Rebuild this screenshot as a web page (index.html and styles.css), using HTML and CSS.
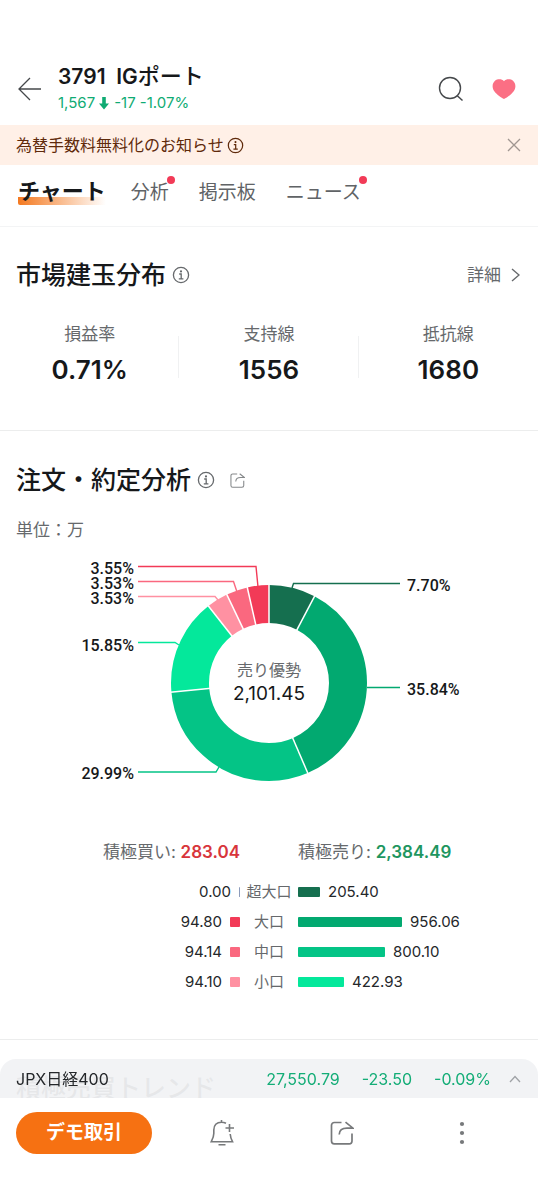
FILE: index.html
```html
<!DOCTYPE html>
<html lang="ja">
<head>
<meta charset="utf-8">
<meta name="viewport" content="width=device-width, initial-scale=1">
<title>3791 IGポート</title>
<link rel="stylesheet" href="styles.css">
</head>
<body>
<svg class="sprite" aria-hidden="true">
  <symbol id="info" viewBox="0 0 18 18"><g fill="none" stroke="currentColor" stroke-width="1.3"><circle cx="9" cy="9" r="7.6"/><path d="M7.2 8h2v4.6M6.8 12.8h4.6"/></g><circle cx="9" cy="5.4" r="1.1" fill="currentColor"/></symbol>
  <symbol id="share" viewBox="0 0 24 24"><path d="M11.5 1.500H4.300A2.800 2.800 0 0 0 1.500 4.300V20A2.800 2.800 0 0 0 4.300 22.800H19.200A2.800 2.800 0 0 0 22 20V12.500M15.500 1.200L23 7.200H17Q9.500 7.200 9.200 13.500" fill="none" stroke="currentColor" stroke-width="1.700"/></symbol>
</svg>
<header class="header">
  <button class="icon-btn" aria-label="戻る"><svg width="24" height="24" viewBox="0 0 24 24"><path d="M13 1L2 12l11 11M2 12h22" fill="none" stroke="currentColor" stroke-width="1.3"/></svg></button>
  <div class="title">
    <h1><span class="code">3791&nbsp; IG</span>ポート</h1>
    <p class="quote"><span>1,567</span><svg width="10" height="13" viewBox="0 0 10 13"><path d="M3.200 0h3.600v6.500H10L5 12.500 0 6.500h3.200z" fill="currentColor"/></svg><span class="change">-17 -1.07%</span></p>
  </div>
  <button class="icon-btn" aria-label="検索"><svg width="26" height="26" viewBox="0 0 26 26"><path d="M19 19.500l5.500 5" stroke="currentColor" stroke-width="1.500"/><circle cx="12" cy="12" r="10.500" fill="none" stroke="currentColor" stroke-width="1.400"/></svg></button>
  <button class="icon-btn heart" aria-label="お気に入り"><svg width="24" height="20" viewBox="0 0 24 20"><path d="M12 2.300C14-.2 18.500-.3 21 1.800c3 2.600 3.200 7.200.5 10.700C19.200 15.500 14.500 19 12 20 9.500 19 4.800 15.500 2.500 12.500-.2 9 0 4.400 3 1.800 5.500-.3 10-.2 12 2.300z" fill="currentColor"/></svg></button>
</header>
<aside class="notice">
  <a href="#notice">為替手数料無料化のお知らせ</a>
  <svg class="info" width="17" height="17"><use href="#info"/></svg>
  <button class="icon-btn close" aria-label="閉じる"><svg width="14" height="14" viewBox="0 0 14 14"><path d="M1 1l12 12M13 1L1 13" stroke="currentColor" stroke-width="1.300"/></svg></button>
</aside>
<nav class="tabs">
  <a class="active" href="#chart">チャート</a>
  <a class="dot" href="#analysis">分析</a>
  <a href="#board">掲示板</a>
  <a class="dot" href="#news">ニュース</a>
</nav>
<main>
  <section class="positions">
    <div class="head">
      <h2>市場建玉分布</h2>
      <svg class="info" width="18" height="18"><use href="#info"/></svg>
      <a class="more" href="#detail">詳細<svg width="9" height="14" viewBox="0 0 9 14"><path d="M1 1l7 6-7 6" fill="none" stroke="currentColor" stroke-width="1.400"/></svg></a>
    </div>
    <dl class="stats">
      <div><dt>損益率</dt><dd>0.71%</dd></div>
      <div><dt>支持線</dt><dd>1556</dd></div>
      <div><dt>抵抗線</dt><dd>1680</dd></div>
    </dl>
  </section>
  <section class="orders">
    <div class="head">
      <h2>注文・約定分析</h2>
      <svg class="info" width="18" height="18"><use href="#info"/></svg>
      <button class="icon-btn share" aria-label="共有"><svg width="15" height="15"><use href="#share"/></svg></button>
    </div>
    <p class="unit">単位：万</p>
    <svg class="donut" viewBox="0 0 400 240" role="img" aria-label="注文・約定分析">
      <g class="ring" fill="none" stroke-width="38" transform="rotate(-90 200 128)">
        <circle class="s1" cx="200" cy="128" r="79" pathLength="100" stroke-dasharray="7.700 92.300"/>
        <circle class="s2" cx="200" cy="128" r="79" pathLength="100" stroke-dasharray="35.840 64.160" stroke-dashoffset="-7.700"/>
        <circle class="s3" cx="200" cy="128" r="79" pathLength="100" stroke-dasharray="29.990 70.010" stroke-dashoffset="-43.540"/>
        <circle class="s4" cx="200" cy="128" r="79" pathLength="100" stroke-dasharray="15.850 84.150" stroke-dashoffset="-73.530"/>
        <circle class="s5" cx="200" cy="128" r="79" pathLength="100" stroke-dasharray="3.530 96.470" stroke-dashoffset="-89.380"/>
        <circle class="s6" cx="200" cy="128" r="79" pathLength="100" stroke-dasharray="3.530 96.470" stroke-dashoffset="-92.910"/>
        <circle class="s7" cx="200" cy="128" r="79" pathLength="100" stroke-dasharray="3.560 96.440" stroke-dashoffset="-96.440"/>
      </g>
      <g stroke="#fff" stroke-width="1.500">
        <path d="M200 29v41"/>
        <path d="M200 29v41" transform="rotate(27.700 200 128)"/>
        <path d="M200 29v41" transform="rotate(156.700 200 128)"/>
        <path d="M200 29v41" transform="rotate(264.700 200 128)"/>
        <path d="M200 29v41" transform="rotate(321.800 200 128)"/>
        <path d="M200 29v41" transform="rotate(334.500 200 128)"/>
        <path d="M200 29v41" transform="rotate(347.200 200 128)"/>
      </g>
      <g fill="none" stroke-width="1.400">
        <path class="s1" d="M331 28.500H224.500L223 33"/>
        <path class="s2" d="M331 132.500H298"/>
        <path class="s3" d="M69 217H147L150 212"/>
        <path class="s4" d="M69 87.500H106L110 90"/>
        <path class="s5" d="M69 41.500H146L149 45"/>
        <path class="s6" d="M69 26.500H164.500L168 37"/>
        <path class="s7" d="M69 11.500H187L189 32"/>
      </g>
      <g class="pct">
        <text x="338" y="36">7.70%</text>
        <text x="338" y="140">35.84%</text>
      </g>
      <g class="pct" text-anchor="end">
        <text x="65" y="19">3.55%</text>
        <text x="65" y="34">3.53%</text>
        <text x="65" y="49">3.53%</text>
        <text x="65" y="96">15.85%</text>
        <text x="65" y="224">29.99%</text>
      </g>
      <g text-anchor="middle">
        <text class="ring-label" x="200" y="121">売り優勢</text>
        <text class="ring-value" x="200" y="145">2,101.45</text>
      </g>
    </svg>
    <div class="totals">
      <p>積極買い: <strong class="buy">283.04</strong></p>
      <p>積極売り: <strong class="sell">2,384.49</strong></p>
    </div>
    <ul class="bars">
      <li><span class="left">0.00<i class="bar none"></i></span><span>超大口</span><span class="right"><i class="bar b1" style="width:22px"></i>205.40</span></li>
      <li><span class="left">94.80<i class="bar b7" style="width:10px"></i></span><span>大口</span><span class="right"><i class="bar b2" style="width:104px"></i>956.06</span></li>
      <li><span class="left">94.14<i class="bar b6" style="width:10px"></i></span><span>中口</span><span class="right"><i class="bar b3" style="width:87px"></i>800.10</span></li>
      <li><span class="left">94.10<i class="bar b5" style="width:10px"></i></span><span>小口</span><span class="right"><i class="bar b4" style="width:46px"></i>422.93</span></li>
    </ul>
  </section>
  <section class="trend">
    <h2>積極売買トレンド</h2>
  </section>
</main>
<footer class="dock">
  <div class="ticker">
    <span class="index">JPX日経400</span>
    <span>27,550.79</span>
    <span>-23.50</span>
    <span>-0.09%</span>
    <button class="icon-btn expand" aria-label="開く"><svg width="12" height="8" viewBox="0 0 12 8"><path d="M1 7l5-5.500L11 7" fill="none" stroke="currentColor" stroke-width="1.300"/></svg></button>
  </div>
  <div class="actions">
    <button class="demo">デモ取引</button>
    <button class="icon-btn" aria-label="アラート"><svg width="26" height="26" viewBox="0 0 26 26"><path d="M17 3.200Q15 2.200 12.500 2.200C7.500 2.200 4.800 5.500 4.800 10v3.500Q4.800 17 2.300 21.700H23.500Q21.500 18 21.200 14M12.500 0v2.200M9.500 24.800h7M20.500 4v8M16.500 8h8.500" fill="none" stroke="currentColor" stroke-width="1.600"/></svg></button>
    <button class="icon-btn" aria-label="共有"><svg width="24" height="24"><use href="#share"/></svg></button>
    <button class="icon-btn" aria-label="メニュー"><svg width="24" height="24" viewBox="0 0 24 24" fill="currentColor"><circle cx="12" cy="3" r="2.100"/><circle cx="12" cy="12" r="2.100"/><circle cx="12" cy="21" r="2.100"/></svg></button>
  </div>
</footer>
</body>
</html>
```
FILE: styles.css
```css
* { box-sizing: border-box; }
body {
  margin: 0;
  background: #fff;
  color: #16181a;
  font: 16px/24px Inter, "Noto Sans CJK JP", sans-serif;
}
h1, h2, p, dl, dd, ul { margin: 0; padding: 0; }
a { color: inherit; text-decoration: none; }
svg { display: block; flex: none; }
.sprite { position: absolute; width: 0; height: 0; }
.icon-btn { display: flex; padding: 0; border: 0; background: none; color: inherit; }
button { font: inherit; cursor: pointer; }

.header {
  display: flex;
  align-items: center;
  height: 125px;
  padding: 52px 22px 0 17px;
  color: #45484b;
}
.title { flex: 1; padding-left: 17px; }
h1 { font-size: 22px; line-height: 28px; font-weight: 500; color: #16181a; }
.code { font-size: 21px; font-weight: 600; }
.quote { display: flex; align-items: center; font-size: 15px; line-height: 24px; color: #0fab73; }
.quote svg { margin: 0 5px 0 4px; }
.heart { margin-left: 28px; color: #fb6f84; }

.notice {
  display: flex;
  align-items: center;
  height: 40px;
  padding: 0 17px 0 16px;
  background: #fff0e7;
  color: #5f2a0b;
}
.notice .info { margin-left: 3px; }
.close { margin-left: auto; color: #a09691; }

.tabs {
  display: flex;
  gap: 30px;
  height: 62px;
  padding: 12px 18px 0;
  border-bottom: 1px solid #f3f4f5;
  font-size: 19px;
  line-height: 32px;
  color: #606366;
}
.tabs a { position: relative; }
.tabs .active {
  align-self: flex-start;
  margin-right: -5px;
  color: #16181a;
  font-size: 22px;
  font-weight: 700;
  line-height: 28px;
  background: linear-gradient(90deg, #f47920, #fff) bottom / 100% 8px no-repeat;
  border-bottom-left-radius: 2px;
}
.dot::after {
  content: "";
  position: absolute;
  top: -1px;
  right: -6px;
  width: 8px;
  height: 8px;
  border-radius: 50%;
  background: #f23a57;
}

.positions { height: 204px; padding: 30px 16px 0; border-bottom: 1px solid #eceded; }
.head { display: flex; align-items: center; color: #66696c; }
h2 { font-size: 25px; line-height: 36px; font-weight: 500; color: #16181a; }
.head .info { margin-left: 6px; }
.more { display: flex; align-items: center; gap: 10px; margin-left: auto; margin-right: 2px; font-size: 17px; }
.stats { display: grid; grid-template-columns: repeat(3, 1fr); margin: 28px -16px 0; text-align: center; }
.stats div { background: linear-gradient(#f0f1f2, #f0f1f2) right 15px / 1px 42px no-repeat; }
.stats div:last-child { background: none; }
.stats dt { font-size: 17px; line-height: 26px; color: #66696c; }
.stats dd { margin-top: 6px; font-size: 26px; line-height: 34px; font-weight: 600; }

.orders { padding: 31px 0 42px; border-bottom: 1px solid #eceded; }
.orders .head, .unit { padding: 0 16px; }
.share { margin-left: 15px; color: #85888a; }
.unit { margin-top: 19px; font-size: 17px; line-height: 26px; color: #66696c; }
.donut { width: 400px; max-width: 100%; margin: 12px auto 0; }
.pct { font: 500 16px Roboto, sans-serif; fill: #16181a; }
.ring-label { font-size: 16px; fill: #66696c; }
.ring-value { font-size: 19px; fill: #16181a; }
.s1 { stroke: #156f4f; }
.s2 { stroke: #02a970; }
.s3 { stroke: #04c486; }
.s4 { stroke: #04e89b; }
.s5 { stroke: #ff91a2; }
.s6 { stroke: #fa687f; }
.s7 { stroke: #f23a57; }
.totals { display: grid; grid-template-columns: 1fr 1fr; gap: 58px; margin-top: 44px; font-size: 17px; line-height: 26px; color: #66696c; }
.totals p:first-child { text-align: right; }
.totals strong { font-weight: 600; font-size: 17px; }
.buy { color: #d8353b; }
.sell { color: #1e965f; }
.bars { margin-top: 12px; list-style: none; color: #66696c; }
.bars li { display: grid; grid-template-columns: 1fr 58px 1fr; align-items: center; height: 30px; text-align: center; font-size: 15px; }
.left, .right { display: flex; align-items: center; gap: 8px; color: #24272a; }
.left { justify-content: flex-end; }
.bar { height: 10px; border-radius: 1px; }
.none { width: 1px; background: #8c9bbb; }
.b1 { background: #156f4f; }
.b2 { background: #02a970; }
.b3 { background: #04c486; }
.b4 { background: #04e89b; }
.b5 { background: #ff91a2; }
.b6 { background: #fa687f; }
.b7 { background: #f23a57; }
.trend { padding: 30px 16px 94px; }

.dock { position: fixed; inset: auto 0 0; }
.ticker {
  display: flex;
  align-items: center;
  gap: 22px;
  height: 39px;
  padding: 0 17px 0 16px;
  border-radius: 16px 16px 0 0;
  background: rgba(241, 242, 244, 0.95);
  color: #14ad77;
}
.index { margin-right: auto; color: #24272a; }
.expand { margin-left: -4px; color: #a0a3a6; }
.actions {
  display: grid;
  grid-template-columns: 146px 1fr 1fr 1fr;
  justify-items: center;
  align-items: center;
  height: 102px;
  padding: 0 16px 32px;
  background: #fff;
  color: #77797b;
}
.demo {
  justify-self: start;
  width: 136px;
  height: 42px;
  border: 0;
  border-radius: 21px;
  background: #f67112;
  color: #fff;
  font-size: 19px;
  font-weight: 700;
}
```
